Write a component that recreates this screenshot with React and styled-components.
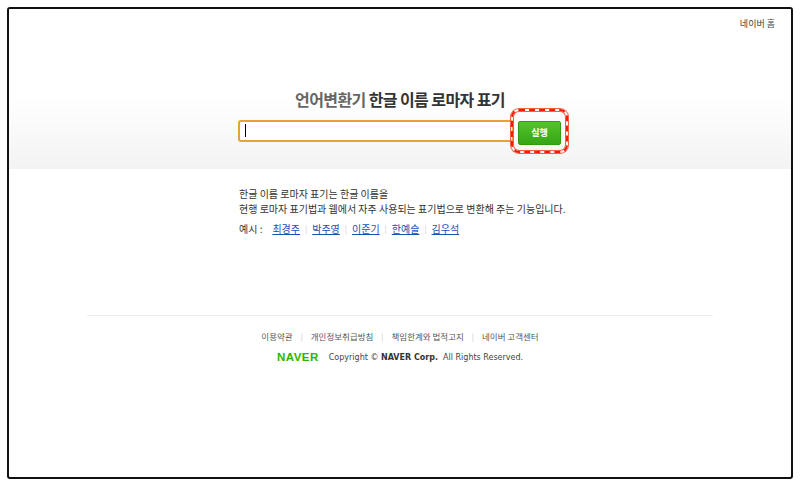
import React from 'react';
import styled, { createGlobalStyle } from 'styled-components';

const Global = createGlobalStyle`
  html, body { margin: 0; padding: 0; background: #fff; }
  body { font-family: "Noto Sans CJK KR", "Liberation Sans", sans-serif; }
`;

const Frame = styled.div`
  margin: 7px;
  width: 782px;
  height: 468px;
  border: 2px solid #111;
  border-radius: 3px;
  box-sizing: content-box;
  overflow: hidden;
  display: flex;
  flex-direction: column;
`;

const Header = styled.div`
  height: 160px;
  background: linear-gradient(#fff 0%, #fff 55%, #f3f3f3 100%);
  display: flex;
  flex-direction: column;
  align-items: center;
  position: relative;
`;

const HomeLink = styled.a`
  position: absolute;
  right: 16px;
  top: 8px;
  font-size: 9px;
  color: #444;
  text-decoration: none;
`;

const Title = styled.h1`
  margin: 79px 0 0;
  font-size: 16px;
  font-weight: 700;
  letter-spacing: -0.6px;
  color: #333;
  line-height: 22px;
  span { color: #666; }
`;

const SearchRow = styled.div`
  display: flex;
  align-items: center;
  gap: 4px;
  margin-top: 7px;
  margin-left: -1px;
`;

const Input = styled.div`
  width: 267px;
  height: 18px;
  border: 2px solid #e8a232;
  border-radius: 3px;
  background: #fff;
  display: flex;
  align-items: center;
  padding-left: 5px;
  &::after { content: ''; width: 1px; height: 13px; background: #000; }
`;

const BtnWrap = styled.div`
  position: relative;
`;

const Button = styled.button`
  width: 43px;
  height: 24px;
  border: 1px solid #2f9a12;
  border-radius: 2px;
  background: linear-gradient(#55c42c, #35a614);
  color: #fff;
  font-size: 9px;
  font-weight: 700;
  font-family: inherit;
  padding: 0;
`;

const Scribble = styled.div`
  position: absolute;
  left: -7px; right: -7px; top: -8px; bottom: -8px;
  border: 2px dashed #f21d0a;
  border-radius: 8px;
  box-shadow: 0 0 0 1px #f5603f, inset 0 0 0 1px #f5603f;
`;

const Body = styled.div`
  padding: 17px 0 0 230px;
  font-size: 10px;
  color: #333;
  line-height: 15px;
  height: 146px;
  box-sizing: border-box;
`;

const Examples = styled.div`
  margin-top: 5px;
  display: flex;
  align-items: center;
`;

const Ex = styled.a`
  color: #1a4fb5;
  text-decoration: underline;
`;

const Sep = styled.span`
  color: #ccc;
  margin: 0 5px;
  font-size: 8px;
`;

const Footer = styled.div`
  margin: 0 78px;
  border-top: 1px solid #eee;
  padding-top: 14px;
  display: flex;
  flex-direction: column;
  align-items: center;
  gap: 9px;
`;

const Links = styled.div`
  font-size: 8.5px;
  color: #555;
  display: flex;
  align-items: center;
`;

const Copy = styled.div`
  display: flex;
  align-items: center;
  gap: 10px;
  font-size: 8px;
  color: #444;
  font-family: "DejaVu Sans", sans-serif;
  b { color: #333; }
`;

const Logo = styled.span`
  font-family: "Liberation Sans", sans-serif;
  font-weight: 900;
  font-size: 11.5px;
  color: #2db400;
  letter-spacing: 0.5px;
`;

export default function App() {
  const names = ['최경주', '박주영', '이준기', '한예슬', '김우석'];
  const links = ['이용약관', '개인정보취급방침', '책임한계와 법적고지', '네이버 고객센터'];
  return (
    <Frame>
      <Global />
      <Header>
        <HomeLink>네이버 홈</HomeLink>
        <Title><span>언어변환기</span> 한글 이름 로마자 표기</Title>
        <SearchRow>
          <Input />
          <BtnWrap>
            <Button>실행</Button>
            <Scribble />
          </BtnWrap>
        </SearchRow>
      </Header>
      <Body>
        <div>한글 이름 로마자 표기는 한글 이름을</div>
        <div>현행 로마자 표기법과 웹에서 자주 사용되는 표기법으로 변환해 주는 기능입니다.</div>
        <Examples>
          <span style={{ marginRight: 10 }}>예시 :</span>
          {names.map((n, i) => (
            <React.Fragment key={n}>
              {i > 0 && <Sep>|</Sep>}
              <Ex>{n}</Ex>
            </React.Fragment>
          ))}
        </Examples>
      </Body>
      <Footer>
        <Links>
          {links.map((l, i) => (
            <React.Fragment key={l}>
              {i > 0 && <Sep style={{ margin: '0 8px' }}>|</Sep>}
              <span>{l}</span>
            </React.Fragment>
          ))}
        </Links>
        <Copy>
          <Logo>NAVER</Logo>
          <span>Copyright © <b>NAVER Corp.</b>&nbsp; All Rights Reserved.</span>
        </Copy>
      </Footer>
    </Frame>
  );
}
